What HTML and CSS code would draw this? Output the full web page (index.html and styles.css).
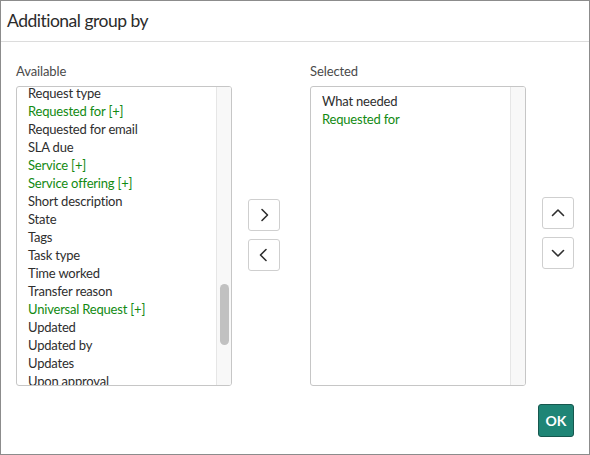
FILE: index.html
```
<!DOCTYPE html>
<html>
<head>
<meta charset="utf-8">
<link rel="stylesheet" href="styles.css">
</head>
<body>
<div class="dialog">
  <div class="header"><h1 class="title">Additional group by</h1></div>
  <div class="content">
    <div class="label">Available</div>
    <div></div>
    <div></div>
    <div></div>
    <div class="label">Selected</div>
    <div></div>
    <div></div>

    <div class="listbox">
      <ul class="items shifted">
        <li>Request type</li>
        <li class="ref">Requested for [+]</li>
        <li>Requested for email</li>
        <li>SLA due</li>
        <li class="ref">Service [+]</li>
        <li class="ref">Service offering [+]</li>
        <li>Short description</li>
        <li>State</li>
        <li>Tags</li>
        <li>Task type</li>
        <li>Time worked</li>
        <li>Transfer reason</li>
        <li class="ref">Universal Request [+]</li>
        <li>Updated</li>
        <li>Updated by</li>
        <li>Updates</li>
        <li>Upon approval</li>
      </ul>
      <div class="track"><div class="thumb"></div></div>
    </div>
    <div></div>
    <div class="btncol">
      <button class="iconbtn" aria-label="Add"><svg viewBox="0 0 16 16" width="16" height="16"><path d="M6 2.5 L11.5 8 L6 13.5"/></svg></button>
      <button class="iconbtn" aria-label="Remove"><svg viewBox="0 0 16 16" width="16" height="16"><path d="M10 2.5 L4.5 8 L10 13.5"/></svg></button>
    </div>
    <div></div>
    <div class="listbox">
      <ul class="items sel">
        <li>What needed</li>
        <li class="ref">Requested for</li>
      </ul>
      <div class="track"></div>
    </div>
    <div></div>
    <div class="btncol up">
      <button class="iconbtn" aria-label="Move up"><svg viewBox="0 0 16 16" width="16" height="16"><path d="M2.5 10.5 L8 5 L13.5 10.5"/></svg></button>
      <button class="iconbtn" aria-label="Move down"><svg viewBox="0 0 16 16" width="16" height="16"><path d="M2.5 5.5 L8 11 L13.5 5.5"/></svg></button>
    </div>
  </div>
  <div class="footer"><button class="ok">OK</button></div>
</div>
</body>
</html>
```
FILE: styles.css
```
* { box-sizing: border-box; }
html, body { margin: 0; padding: 0; }
body { font-family: Lato, "Liberation Sans", sans-serif; color: #2e2e2e; background: #fff; }
.dialog {
  width: 590px; height: 455px;
  border: 1px solid #8c8c8c;
  display: flex; flex-direction: column;
}
.header {
  height: 41px;
  border-bottom: 1px solid #dcdcdc;
  padding: 0 0 0 6px;
  display: flex; align-items: center;
}
.title { margin: 0; font-size: 17.5px; letter-spacing: -0.5px; font-weight: 400; color: #2b2b2b; line-height: 22px; padding-bottom: 1px; }
.content {
  display: grid;
  grid-template-columns: 216px 16px 32px 30px 216px 16px 32px;
  grid-template-rows: 18px 300px;
  row-gap: 5px;
  padding: 20px 0 0 15px;
}
.label { font-size: 13px; line-height: 18px; color: #4a4a4a; letter-spacing: -0.1px; }
.listbox {
  border: 1px solid #c6c6c6;
  border-radius: 3px;
  display: flex;
  overflow: hidden;
  margin-top: 1px;
  margin-bottom: -1px;
}
.items {
  list-style: none; margin: 0; padding: 0 0 0 11px;
  flex: 1;
  font-size: 13px; line-height: 18px; letter-spacing: -0.2px;
}
.items.shifted { margin-top: -3px; }
.items.sel { padding-top: 5px; }
.items li { white-space: nowrap; }
.ref { color: #128a12; }
.track {
  width: 15px;
  background: #f8f8f8;
  border-left: 1px solid #e6e6e6;
  padding: 197px 0 0 3px;
}
.thumb { width: 9px; height: 61px; border-radius: 4.5px; background: #c1c1c1; }
.btncol {
  display: flex; flex-direction: column; justify-content: center; gap: 8px;
}
.btncol.up { padding-bottom: 4px; }
.iconbtn {
  width: 32px; height: 32px; padding: 0;
  border: 1px solid #cfcfcf; border-radius: 3px;
  background: #fff;
  display: flex; align-items: center; justify-content: center;
}
.iconbtn svg path { fill: none; stroke: #2e2e2e; stroke-width: 1.6; stroke-linecap: round; stroke-linejoin: round; }
.footer {
  display: flex; justify-content: flex-end;
  padding: 19px 15px 0 0;
}
.ok {
  width: 36px; height: 33px; padding: 0;
  background: #1f8576; color: #fff;
  border: 1px solid #16574e; border-radius: 3px;
  font-family: Lato, "Liberation Sans", sans-serif;
  font-size: 14px; font-weight: 700;
}
```
